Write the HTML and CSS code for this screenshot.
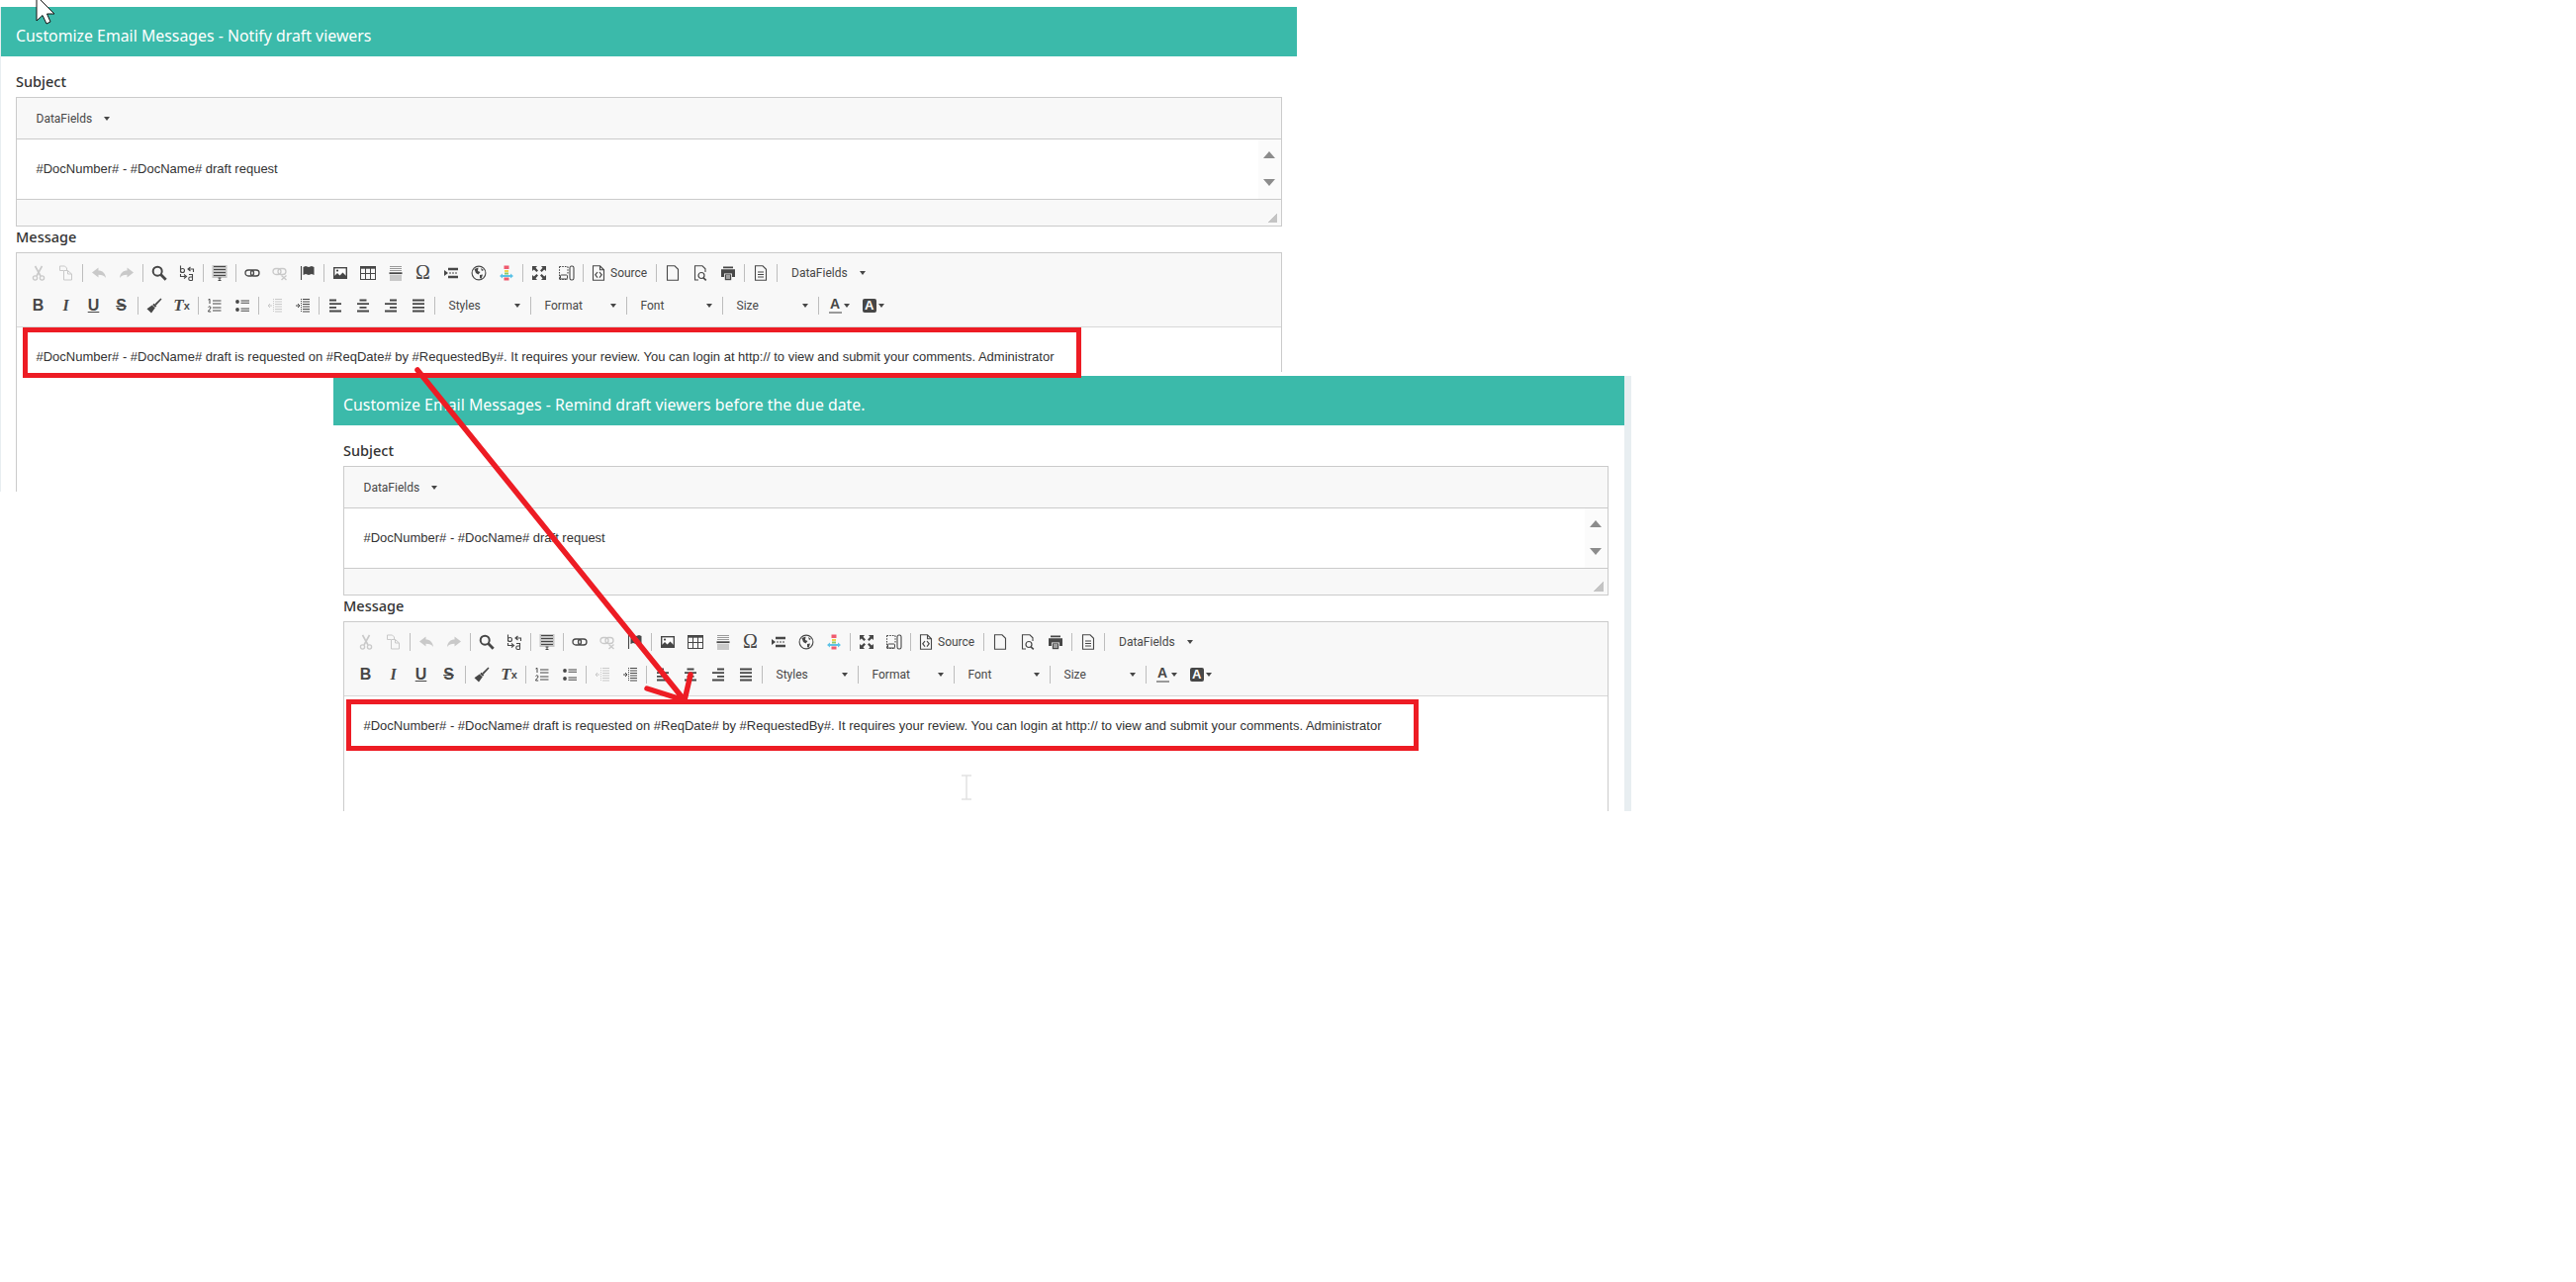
FILE: index.html
```html
<!DOCTYPE html>
<html lang="en">
<head>
<meta charset="utf-8">
<title>Customize Email Messages</title>
<link rel="stylesheet" href="styles.css">
</head>
<body>
<svg class="defs" width="0" height="0" aria-hidden="true">
  <symbol id="i-cut" viewBox="0 0 16 16"><path d="M4.5 1 L10 11 M11.5 1 L6 11" fill="none" stroke="currentColor" stroke-width="1.6"/><circle cx="4.5" cy="13" r="2.1" fill="none" stroke="currentColor" stroke-width="1.3"/><circle cx="11.5" cy="13" r="2.1" fill="none" stroke="currentColor" stroke-width="1.3"/></symbol>
  <symbol id="i-copy" viewBox="0 0 16 16"><path d="M5 5.5 H1.5 V1 H6.5 L8.5 3 V5 M5.5 5.5 H9.5 L13.5 9 V15 H5.5 Z M9.5 5.5 V9 H13.5" fill="none" stroke="currentColor" stroke-width="1"/></symbol>
  <symbol id="i-undo" viewBox="0 0 16 16"><path d="M1 7.5 L7.5 2.5 V5.5 C11.5 5.5 14.5 8 15 13 C13.5 10.5 11 9.7 7.5 9.7 V12.5 Z" fill="currentColor"/></symbol>
  <symbol id="i-redo" viewBox="0 0 16 16"><path d="M15 7.5 L8.5 2.5 V5.5 C4.5 5.5 1.5 8 1 13 C2.5 10.5 5 9.7 8.5 9.7 V12.5 Z" fill="currentColor"/></symbol>
  <symbol id="i-find" viewBox="0 0 16 16"><circle cx="6.2" cy="6.2" r="4.5" fill="none" stroke="currentColor" stroke-width="2"/><path d="M9.5 9.5 L14.7 14.7" stroke="currentColor" stroke-width="2.8"/></symbol>
  <symbol id="i-replace" viewBox="0 0 16 16"><path d="M1.5 0.5 V7.5 M1.5 5.5 a2 2 0 1 1 4 0 a2 2 0 1 1 -4 0 M9 4 H14.5 V7 M11.5 2 L9 4 L11.5 6 M1.5 9 V11.5 H6.5 M5 9.5 L7.5 11.5 L5 13.5 M10 9.5 H13.5 V15.5 M13.5 12 H11.5 a1.7 1.7 0 1 0 0 3.5 H13.5" fill="none" stroke="currentColor" stroke-width="1.1"/></symbol>
  <symbol id="i-selectall" viewBox="0 0 16 16"><rect x="0.5" y="0" width="15" height="13" fill="#c6c6c6"/><path d="M2 1.5 H14 M2 4.5 H14 M2 7.5 H14 M2 10.5 H14" stroke="currentColor" stroke-width="1"/><path d="M6.5 13 H9.5 M8 13 V15.5 M6.5 15.5 H9.5" stroke="currentColor" stroke-width="1"/></symbol>
  <symbol id="i-link" viewBox="0 0 16 16"><rect x="1" y="5" width="8.5" height="6" rx="3" fill="none" stroke="currentColor" stroke-width="1.3"/><rect x="6.5" y="5" width="8.5" height="6" rx="3" fill="none" stroke="currentColor" stroke-width="1.3"/></symbol>
  <symbol id="i-unlink" viewBox="0 0 16 16"><rect x="1" y="3.5" width="8" height="6" rx="3" fill="none" stroke="currentColor" stroke-width="1.3"/><rect x="6" y="3.5" width="8" height="6" rx="3" fill="none" stroke="currentColor" stroke-width="1.3"/><path d="M9.5 10.5 L14.5 15 M14.5 10.5 L9.5 15" stroke="currentColor" stroke-width="1.4"/></symbol>
  <symbol id="i-anchor" viewBox="0 0 16 16"><path d="M1.5 1 V15" stroke="currentColor" stroke-width="1.1"/><path d="M3.5 2 L6 1 L9 2 L12 1 L14.5 2 V10 L12 9 L9 10 L6 9 L3.5 10 Z" fill="currentColor"/></symbol>
  <symbol id="i-image" viewBox="0 0 16 16"><rect x="1.7" y="2.7" width="12.6" height="10.6" fill="#fff" stroke="currentColor" stroke-width="1.4"/><path d="M2 13 V11 L5 8 L7.5 10.5 L10.5 7.5 L14 11 V13 Z" fill="currentColor"/><circle cx="5" cy="5.6" r="1.1" fill="currentColor"/></symbol>
  <symbol id="i-table" viewBox="0 0 16 16"><rect x="0.5" y="1.5" width="15" height="13" fill="none" stroke="currentColor" stroke-width="1"/><path d="M0.5 2.5 H15.5" stroke="currentColor" stroke-width="2.4"/><path d="M0.5 8.5 H15.5 M5.5 2 V14.5 M10.5 2 V14.5" stroke="currentColor" stroke-width="1"/></symbol>
  <symbol id="i-hr" viewBox="0 0 16 16"><path d="M2 1.5 H14 M2 3.5 H14 M2 5.5 H14 M2 11 H14 M2 13 H14 M2 15 H14" stroke="#9a9a9a" stroke-width="1"/><path d="M1.5 8.2 H14.5" stroke="currentColor" stroke-width="1.8"/></symbol>
  <symbol id="i-pagebreak" viewBox="0 0 16 16"><path d="M1 5 L5 8 L1 11 Z" fill="currentColor"/><path d="M5 4 H15 M5 12 H15" stroke="currentColor" stroke-width="2.6"/><path d="M6 8 H15" stroke="currentColor" stroke-width="1.2" stroke-dasharray="2 1"/></symbol>
  <symbol id="i-globe" viewBox="0 0 16 16"><circle cx="8" cy="8" r="6.9" fill="none" stroke="currentColor" stroke-width="1.1"/><path d="M3.5 4 L7.5 2.5 L7 6 L9.5 7 L7.5 9.5 L5 8 Z M9 10 L12 9.5 L10.5 14 L9 13 Z M10 3 L13 5 L11 6 Z" fill="currentColor"/></symbol>
  <symbol id="i-org" viewBox="0 0 16 16"><rect x="5.5" y="0.5" width="5" height="3.5" fill="#ef5a6e"/><rect x="6" y="5" width="4" height="2" fill="#f2d34f"/><rect x="6" y="7.5" width="4" height="2" fill="#8ccb6a"/><path d="M1 11 L4 8.5 V10 H12 V8.5 L15 11 L12 13.5 V12 H4 V13.5 Z" fill="#5cc2e6"/><rect x="5.5" y="12.5" width="5" height="3" fill="#ef5a6e"/></symbol>
  <symbol id="i-max" viewBox="0 0 16 16"><path d="M1 1 H6 L4.5 2.8 L7 5.4 L5.4 7 L2.8 4.5 L1 6 Z M15 1 H10 L11.5 2.8 L9 5.4 L10.6 7 L13.2 4.5 L15 6 Z M1 15 H6 L4.5 13.2 L7 10.6 L5.4 9 L2.8 11.5 L1 10 Z M15 15 H10 L11.5 13.2 L9 10.6 L10.6 9 L13.2 11.5 L15 10 Z" fill="currentColor"/></symbol>
  <symbol id="i-blocks" viewBox="0 0 16 16"><path d="M0.5 1.5 H9 M0.5 1.5 V14.5 M0.5 14.5 H9 M9 1.5 V9" fill="none" stroke="currentColor" stroke-width="1.1" stroke-dasharray="1.6 1.1"/><rect x="1.5" y="10" width="7" height="4" rx="1" fill="none" stroke="currentColor" stroke-width="1"/><rect x="11" y="1" width="4" height="14" rx="1.8" fill="none" stroke="currentColor" stroke-width="1.1"/></symbol>
  <symbol id="i-source" viewBox="0 0 16 16"><path d="M2.5 0.8 H9.5 L13.5 4.8 V15.2 H2.5 Z M9.5 0.8 V4.8 H13.5" fill="none" stroke="currentColor" stroke-width="1.1"/><path d="M7 7 L4.8 9.8 L7 12.6 M9 7 L11.2 9.8 L9 12.6" fill="none" stroke="currentColor" stroke-width="1.2"/></symbol>
  <symbol id="i-new" viewBox="0 0 16 16"><path d="M2.5 0.8 H10 L13.5 4.3 V15.2 H2.5 Z" fill="none" stroke="currentColor" stroke-width="1.1"/></symbol>
  <symbol id="i-preview" viewBox="0 0 16 16"><path d="M6 15 H2.5 V0.8 H10 L13 3.8 V7" fill="none" stroke="currentColor" stroke-width="1.1"/><circle cx="9" cy="10.5" r="3" fill="none" stroke="currentColor" stroke-width="1.2"/><path d="M11 12.8 L13.8 15.4" stroke="currentColor" stroke-width="1.6"/></symbol>
  <symbol id="i-print" viewBox="0 0 16 16"><path d="M3 1.5 H13 V3.2 H3 Z M1 4.2 H15 V12 H12 V8.5 H4 V12 H1 Z" fill="currentColor"/><path d="M4.8 9.3 H11.2 V15.2 H4.8 Z" fill="currentColor"/><path d="M6 11 H10 M6 13 H10" stroke="#f8f8f8" stroke-width="1"/></symbol>
  <symbol id="i-templates" viewBox="0 0 16 16"><path d="M2.5 0.8 H10 L13.5 4.3 V15.2 H2.5 Z" fill="none" stroke="currentColor" stroke-width="1.1"/><path d="M5 7 H11 M5 9.5 H11 M5 12 H11" stroke="currentColor" stroke-width="1.1"/></symbol>
  <symbol id="i-brush" viewBox="0 0 16 16"><path d="M14.5 0.5 L15.5 1.5 L9.8 7.8 L8.3 6.4 Z" fill="currentColor"/><path d="M7.6 5.8 L10.3 8.3 L9 9.8 L6.2 7.2 Z M5.7 7.6 L8.8 10.3 L5 15.5 L0.5 11.2 Z" fill="currentColor"/></symbol>
  <symbol id="i-ol" viewBox="0 0 16 16"><path d="M1.5 2 L3 1.3 V6 M1.5 9.5 C2 8.4 4.2 8.6 4 10 C3.8 11.5 1.5 12.5 1.5 14 H4.2" fill="none" stroke="currentColor" stroke-width="1"/><path d="M6 3 H14.5 M6 6 H14.5 M6 10 H14.5 M6 13 H14.5" stroke="currentColor" stroke-width="1.2"/></symbol>
  <symbol id="i-ul" viewBox="0 0 16 16"><circle cx="3" cy="4" r="1.9" fill="currentColor"/><circle cx="3" cy="12" r="1.9" fill="currentColor"/><path d="M6.5 3 H15 M6.5 5.2 H15 M6.5 11 H15 M6.5 13.2 H15" stroke="currentColor" stroke-width="1.1"/></symbol>
  <symbol id="i-outdent" viewBox="0 0 16 16"><path d="M8 1.5 H15 M8 4 H15 M8 6.5 H15 M8 9 H15 M8 11.5 H15 M8 14 H15" stroke="currentColor" stroke-width="1"/><path d="M6.5 1 V15" stroke="currentColor" stroke-width="1" stroke-dasharray="1 1"/><path d="M1 8 H5 M3 6 L1 8 L3 10" fill="none" stroke="currentColor" stroke-width="1"/></symbol>
  <symbol id="i-indent" viewBox="0 0 16 16"><path d="M8 1.5 H15 M8 4 H15 M8 6.5 H15 M8 9 H15 M8 11.5 H15 M8 14 H15" stroke="currentColor" stroke-width="1"/><path d="M6.5 1 V15" stroke="currentColor" stroke-width="1" stroke-dasharray="1 1"/><path d="M1 8 H5 M3 6 L5 8 L3 10" fill="none" stroke="currentColor" stroke-width="1"/></symbol>
  <symbol id="i-left" viewBox="0 0 16 16"><path d="M2 2.5 H9 M2 6.2 H14 M2 9.8 H9 M2 13.5 H14" stroke="currentColor" stroke-width="1.8"/></symbol>
  <symbol id="i-center" viewBox="0 0 16 16"><path d="M4.5 2.5 H11.5 M2 6.2 H14 M4.5 9.8 H11.5 M2 13.5 H14" stroke="currentColor" stroke-width="1.8"/></symbol>
  <symbol id="i-right" viewBox="0 0 16 16"><path d="M7 2.5 H14 M2 6.2 H14 M7 9.8 H14 M2 13.5 H14" stroke="currentColor" stroke-width="1.8"/></symbol>
  <symbol id="i-justify" viewBox="0 0 16 16"><path d="M2 2.5 H14 M2 6.2 H14 M2 9.8 H14 M2 13.5 H14" stroke="currentColor" stroke-width="1.8"/></symbol>
</svg>

<section class="panel panel-one">
  <h2 class="title">Customize Email Messages - Notify draft viewers</h2>
  <div class="body">
    <div class="field-label">Subject</div>
    <div class="editor">
      <div class="subject-bar"><span class="combo-text">DataFields</span><span class="caret caret-gap"></span></div>
      <div class="subject-content"><span>#DocNumber# - #DocName# draft request</span>
        <div class="spin"><span class="spin-up"></span><span class="spin-down"></span></div>
      </div>
      <div class="foot"><span class="grip"></span></div>
    </div>
    <div class="field-label">Message</div>
    <div class="editor">
      <div class="toolbar">
        <div class="row">
          <span class="ti off"><svg class="ic"><use href="#i-cut"/></svg></span><span class="ti off"><svg class="ic"><use href="#i-copy"/></svg></span><span class="sep"></span>
          <span class="ti off"><svg class="ic"><use href="#i-undo"/></svg></span><span class="ti off"><svg class="ic"><use href="#i-redo"/></svg></span><span class="sep"></span>
          <span class="ti"><svg class="ic"><use href="#i-find"/></svg></span><span class="ti"><svg class="ic"><use href="#i-replace"/></svg></span><span class="sep"></span>
          <span class="ti"><svg class="ic"><use href="#i-selectall"/></svg></span><span class="sep"></span>
          <span class="ti"><svg class="ic"><use href="#i-link"/></svg></span><span class="ti off"><svg class="ic"><use href="#i-unlink"/></svg></span><span class="ti"><svg class="ic"><use href="#i-anchor"/></svg></span><span class="sep"></span>
          <span class="ti"><svg class="ic"><use href="#i-image"/></svg></span><span class="ti"><svg class="ic"><use href="#i-table"/></svg></span><span class="ti"><svg class="ic"><use href="#i-hr"/></svg></span><span class="ti glyph-omega">Ω</span><span class="ti"><svg class="ic"><use href="#i-pagebreak"/></svg></span><span class="ti"><svg class="ic"><use href="#i-globe"/></svg></span><span class="ti"><svg class="ic"><use href="#i-org"/></svg></span><span class="sep"></span>
          <span class="ti"><svg class="ic"><use href="#i-max"/></svg></span><span class="ti"><svg class="ic"><use href="#i-blocks"/></svg></span><span class="sep"></span>
          <span class="source"><svg class="ic"><use href="#i-source"/></svg><span class="combo-text">Source</span></span><span class="sep"></span>
          <span class="ti"><svg class="ic"><use href="#i-new"/></svg></span><span class="ti"><svg class="ic"><use href="#i-preview"/></svg></span><span class="ti"><svg class="ic"><use href="#i-print"/></svg></span><span class="sep"></span>
          <span class="ti"><svg class="ic"><use href="#i-templates"/></svg></span><span class="sep"></span>
          <span class="datafields"><span class="combo-text">DataFields</span><span class="caret caret-gap"></span></span>
        </div>
        <div class="row">
          <span class="ti glyph glyph-b">B</span><span class="ti glyph glyph-i">I</span><span class="ti glyph glyph-u">U</span><span class="ti glyph glyph-s">S</span><span class="sep"></span>
          <span class="ti"><svg class="ic"><use href="#i-brush"/></svg></span><span class="ti glyph glyph-tx">T<sub>x</sub></span><span class="sep"></span>
          <span class="ti"><svg class="ic"><use href="#i-ol"/></svg></span><span class="ti"><svg class="ic"><use href="#i-ul"/></svg></span><span class="sep"></span>
          <span class="ti off"><svg class="ic"><use href="#i-outdent"/></svg></span><span class="ti"><svg class="ic"><use href="#i-indent"/></svg></span><span class="sep"></span>
          <span class="ti"><svg class="ic"><use href="#i-left"/></svg></span><span class="ti"><svg class="ic"><use href="#i-center"/></svg></span><span class="ti"><svg class="ic"><use href="#i-right"/></svg></span><span class="ti"><svg class="ic"><use href="#i-justify"/></svg></span><span class="sep"></span>
          <span class="combo"><span class="combo-text">Styles</span><span class="caret"></span></span><span class="sep"></span>
          <span class="combo"><span class="combo-text">Format</span><span class="caret"></span></span><span class="sep"></span>
          <span class="combo"><span class="combo-text">Font</span><span class="caret"></span></span><span class="sep"></span>
          <span class="combo"><span class="combo-text">Size</span><span class="caret"></span></span><span class="sep"></span>
          <span class="color"><span class="glyph-a">A</span><span class="caret"></span></span><span class="color"><span class="glyph-bg">A</span><span class="caret"></span></span>
        </div>
      </div>
      <div class="message-content">#DocNumber# - #DocName# draft is requested on #ReqDate# by #RequestedBy#. It requires your review. You can login at http:// to view and submit your comments. Administrator</div>
    </div>
  </div>
</section>

<section class="panel panel-two">
  <div class="panel-main">
    <h2 class="title">Customize Email Messages - Remind draft viewers before the due date.</h2>
    <div class="body">
      <div class="field-label">Subject</div>
      <div class="editor">
        <div class="subject-bar"><span class="combo-text">DataFields</span><span class="caret caret-gap"></span></div>
        <div class="subject-content"><span>#DocNumber# - #DocName# draft request</span>
          <div class="spin"><span class="spin-up"></span><span class="spin-down"></span></div>
        </div>
        <div class="foot"><span class="grip"></span></div>
      </div>
      <div class="field-label">Message</div>
      <div class="editor">
        <div class="toolbar">
          <div class="row">
            <span class="ti off"><svg class="ic"><use href="#i-cut"/></svg></span><span class="ti off"><svg class="ic"><use href="#i-copy"/></svg></span><span class="sep"></span>
            <span class="ti off"><svg class="ic"><use href="#i-undo"/></svg></span><span class="ti off"><svg class="ic"><use href="#i-redo"/></svg></span><span class="sep"></span>
            <span class="ti"><svg class="ic"><use href="#i-find"/></svg></span><span class="ti"><svg class="ic"><use href="#i-replace"/></svg></span><span class="sep"></span>
            <span class="ti"><svg class="ic"><use href="#i-selectall"/></svg></span><span class="sep"></span>
            <span class="ti"><svg class="ic"><use href="#i-link"/></svg></span><span class="ti off"><svg class="ic"><use href="#i-unlink"/></svg></span><span class="ti"><svg class="ic"><use href="#i-anchor"/></svg></span><span class="sep"></span>
            <span class="ti"><svg class="ic"><use href="#i-image"/></svg></span><span class="ti"><svg class="ic"><use href="#i-table"/></svg></span><span class="ti"><svg class="ic"><use href="#i-hr"/></svg></span><span class="ti glyph-omega">Ω</span><span class="ti"><svg class="ic"><use href="#i-pagebreak"/></svg></span><span class="ti"><svg class="ic"><use href="#i-globe"/></svg></span><span class="ti"><svg class="ic"><use href="#i-org"/></svg></span><span class="sep"></span>
            <span class="ti"><svg class="ic"><use href="#i-max"/></svg></span><span class="ti"><svg class="ic"><use href="#i-blocks"/></svg></span><span class="sep"></span>
            <span class="source"><svg class="ic"><use href="#i-source"/></svg><span class="combo-text">Source</span></span><span class="sep"></span>
            <span class="ti"><svg class="ic"><use href="#i-new"/></svg></span><span class="ti"><svg class="ic"><use href="#i-preview"/></svg></span><span class="ti"><svg class="ic"><use href="#i-print"/></svg></span><span class="sep"></span>
            <span class="ti"><svg class="ic"><use href="#i-templates"/></svg></span><span class="sep"></span>
            <span class="datafields"><span class="combo-text">DataFields</span><span class="caret caret-gap"></span></span>
          </div>
          <div class="row">
            <span class="ti glyph glyph-b">B</span><span class="ti glyph glyph-i">I</span><span class="ti glyph glyph-u">U</span><span class="ti glyph glyph-s">S</span><span class="sep"></span>
            <span class="ti"><svg class="ic"><use href="#i-brush"/></svg></span><span class="ti glyph glyph-tx">T<sub>x</sub></span><span class="sep"></span>
            <span class="ti"><svg class="ic"><use href="#i-ol"/></svg></span><span class="ti"><svg class="ic"><use href="#i-ul"/></svg></span><span class="sep"></span>
            <span class="ti off"><svg class="ic"><use href="#i-outdent"/></svg></span><span class="ti"><svg class="ic"><use href="#i-indent"/></svg></span><span class="sep"></span>
            <span class="ti"><svg class="ic"><use href="#i-left"/></svg></span><span class="ti"><svg class="ic"><use href="#i-center"/></svg></span><span class="ti"><svg class="ic"><use href="#i-right"/></svg></span><span class="ti"><svg class="ic"><use href="#i-justify"/></svg></span><span class="sep"></span>
            <span class="combo"><span class="combo-text">Styles</span><span class="caret"></span></span><span class="sep"></span>
            <span class="combo"><span class="combo-text">Format</span><span class="caret"></span></span><span class="sep"></span>
            <span class="combo"><span class="combo-text">Font</span><span class="caret"></span></span><span class="sep"></span>
            <span class="combo"><span class="combo-text">Size</span><span class="caret"></span></span><span class="sep"></span>
            <span class="color"><span class="glyph-a">A</span><span class="caret"></span></span><span class="color"><span class="glyph-bg">A</span><span class="caret"></span></span>
          </div>
        </div>
        <div class="message-content">#DocNumber# - #DocName# draft is requested on #ReqDate# by #RequestedBy#. It requires your review. You can login at http:// to view and submit your comments. Administrator</div>
      </div>
    </div>
  </div>
  <div class="panel-scroll"></div>
</section>

<div class="callout callout-one"></div>
<div class="callout callout-two"></div>

<svg class="overlay" viewBox="0 0 2604 1296" aria-hidden="true">
  <path class="arrow" d="M422 374 L692 708 M654 696 L692 708 L698 682"/>
  <path class="ibeam" d="M972 784 H982 M977 784 V808 M972 808 H982"/>
  <path class="pointer" d="M37 -4 V21 L43 15.5 L47 24 L51 22 L47.5 14 H55 Z"/>
</svg>
</body>
</html>
```

FILE: styles.css
```css
* { box-sizing: border-box; }
html, body { margin: 0; padding: 0; width: 2604px; height: 1296px; overflow: hidden; background: #fff; }
body { position: relative; font-family: "Noto Sans", sans-serif; color: #333; }
.defs { position: absolute; }

.panel { position: absolute; background: #fff; overflow: hidden; }
.panel-one { left: 0; top: 7px; width: 1311px; height: 490px; border-left: 1px solid #e8eef1; }
.panel-two { left: 337px; top: 376px; width: 1312px; height: 444px; padding-top: 4px; display: flex; }
.panel-main { flex: 1; min-width: 0; }
.panel-scroll { width: 7px; background: #e8eef1; }

.title { margin: 0; height: 50px; padding-left: 15px; background: #3bbaaa; color: #fff; font-size: 15.85px; font-weight: 400; line-height: 58px; overflow: hidden; }
.panel-two .title { padding-left: 10px; }

.body { padding: 15px 15px 0; }
.panel-two .body { padding: 15px 16px 0 10px; }

.field-label { height: 26px; line-height: 21px; font-size: 14.5px; font-weight: 500; color: #333; }

.editor { border: 1px solid #cbcbcb; }
.subject-bar { display: flex; align-items: center; height: 42px; padding-left: 19.5px; background: #f8f8f8; border-bottom: 1px solid #cbcbcb; }
.subject-content { position: relative; display: flex; align-items: center; height: 60px; padding: 0 0 2px 19.5px; background: #fff; font: 13px "Liberation Sans", Arial, sans-serif; color: #333; }
.spin { position: absolute; right: 0; top: 0; bottom: 0; width: 23px; background: #fbfbfb; }
.spin-up, .spin-down { position: absolute; left: 4.5px; width: 0; height: 0; border-left: 6.5px solid transparent; border-right: 6.5px solid transparent; }
.spin-up { top: 12px; border-bottom: 7px solid #8c8c8c; }
.spin-down { bottom: 13px; border-top: 7px solid #8c8c8c; }
.foot { position: relative; height: 27px; background: #f8f8f8; border-top: 1px solid #cbcbcb; }
.grip { position: absolute; right: 4px; bottom: 3px; width: 10px; height: 10px; background: linear-gradient(135deg, transparent 50%, #c4c4c4 50%); }

.toolbar { padding: 3px 0 5px 7.5px; background: #f8f8f8; border-bottom: 1px solid #d8d8d8; }
.row { display: flex; align-items: center; height: 33px; color: #474747; }
.ti { flex: none; display: flex; align-items: center; justify-content: center; width: 28px; height: 22px; }
.ti.off { color: #c9c9c9; }
.ic { display: block; width: 16px; height: 16px; }
.sep { flex: none; display: flex; justify-content: center; width: 5px; }
.sep::before { content: ""; width: 1px; height: 18px; background: #bdbdbd; }

.combo-text { font: 12px Roboto, sans-serif; color: #474747; }
.source { flex: none; display: flex; align-items: center; gap: 4px; width: 69px; padding-left: 5.5px; }
.datafields { flex: none; display: flex; align-items: center; padding-left: 12.5px; }
.combo { flex: none; display: flex; align-items: center; justify-content: space-between; width: 92px; padding: 0 8px 0 12px; }
.caret { flex: none; width: 0; height: 0; border-left: 3.5px solid transparent; border-right: 3.5px solid transparent; border-top: 4px solid #474747; }
.caret-gap { margin-left: 12px; }

.glyph { font-family: "Liberation Sans", Arial, sans-serif; font-size: 16px; font-weight: 700; color: #474747; }
.glyph-i { font-family: "Liberation Serif", serif; font-style: italic; }
.glyph-u { text-decoration: underline; }
.glyph-s { text-decoration: line-through; }
.glyph-tx { font-family: "Liberation Serif", serif; font-style: italic; font-size: 17px; }
.glyph-tx sub { font-size: 11px; font-style: normal; font-family: "Liberation Sans", sans-serif; line-height: 0; }
.glyph-omega { font: 400 20px "Liberation Serif", serif; color: #474747; }
.color { flex: none; display: flex; align-items: center; gap: 2px; width: 34px; padding-left: 8px; }
.glyph-a { font: 700 14px "Liberation Sans", sans-serif; line-height: 15px; color: #474747; border-bottom: 2px solid #9a9a9a; padding: 0 1.5px; }
.glyph-bg { font: 700 13px "Liberation Sans", sans-serif; line-height: 14px; color: #fff; background: #474747; border-radius: 2px; padding: 0 2.5px; }

.message-content { height: 400px; padding: 20px 0 0 19.5px; background: #fff; font: 13px/20px "Liberation Sans", Arial, sans-serif; color: #333; white-space: nowrap; }

.callout { position: absolute; border: 5px solid #ed1c24; pointer-events: none; }
.callout-one { left: 23px; top: 331px; width: 1070px; height: 51px; }
.callout-two { left: 350px; top: 707px; width: 1084px; height: 52px; }

.overlay { position: absolute; left: 0; top: 0; width: 2604px; height: 1296px; pointer-events: none; }
.arrow { fill: none; stroke: #ed1c24; stroke-width: 5.5; stroke-linecap: round; stroke-linejoin: round; }
.ibeam { fill: none; stroke: #e2e2e2; stroke-width: 1.5; }
.pointer { fill: #fff; stroke: #111; stroke-width: 1; }
```
